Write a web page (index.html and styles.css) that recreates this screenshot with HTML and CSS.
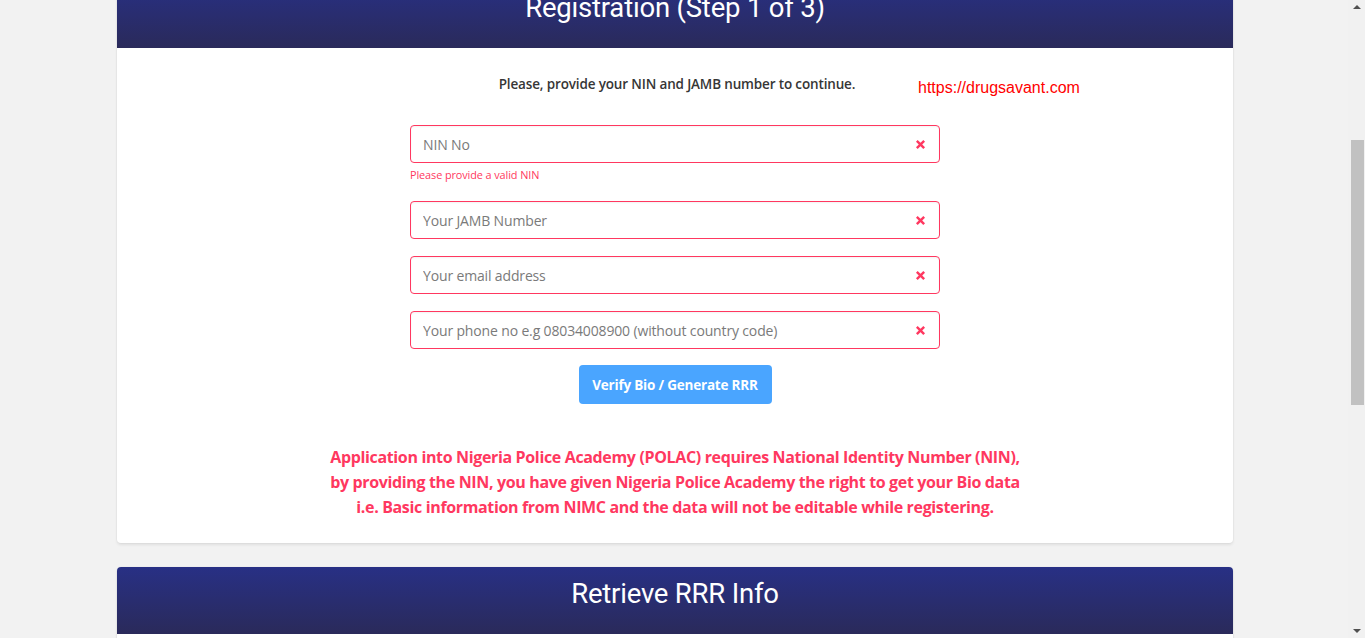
FILE: index.html
```html
<!DOCTYPE html>
<html lang="en">
<head>
<meta charset="utf-8">
<title>Registration</title>
<link rel="stylesheet" href="styles.css">
</head>
<body>
<div class="page">
  <main class="main">
    <section class="card card-first">
      <header class="card-head"><h2 class="card-title">Registration (Step 1 of 3)</h2></header>
      <div class="card-body">
        <a class="watermark" href="#">https://drugsavant.com</a>
        <p class="intro">Please, provide your NIN and JAMB number to continue.</p>
        <form class="form">
          <div class="field field-help">
            <div class="control">
              <input class="input" type="text" placeholder="NIN No">
              <span class="x-icon"><svg viewBox="0 0 12 12" width="11" height="11"><path d="M2 2 L10 10 M10 2 L2 10" stroke="currentColor" stroke-width="2.6"/></svg></span>
            </div>
            <p class="help">Please provide a valid NIN</p>
          </div>
          <div class="field">
            <div class="control">
              <input class="input" type="text" placeholder="Your JAMB Number">
              <span class="x-icon"><svg viewBox="0 0 12 12" width="11" height="11"><path d="M2 2 L10 10 M10 2 L2 10" stroke="currentColor" stroke-width="2.6"/></svg></span>
            </div>
          </div>
          <div class="field">
            <div class="control">
              <input class="input" type="email" placeholder="Your email address">
              <span class="x-icon"><svg viewBox="0 0 12 12" width="11" height="11"><path d="M2 2 L10 10 M10 2 L2 10" stroke="currentColor" stroke-width="2.6"/></svg></span>
            </div>
          </div>
          <div class="field">
            <div class="control">
              <input class="input" type="text" placeholder="Your phone no e.g 08034008900 (without country code)">
              <span class="x-icon"><svg viewBox="0 0 12 12" width="11" height="11"><path d="M2 2 L10 10 M10 2 L2 10" stroke="currentColor" stroke-width="2.6"/></svg></span>
            </div>
          </div>
          <div class="actions">
            <button class="button" type="button">Verify Bio / Generate RRR</button>
          </div>
        </form>
        <p class="notice">Application into Nigeria Police Academy (POLAC) requires National Identity Number (NIN),<br>by providing the NIN, you have given Nigeria Police Academy the right to get your Bio data<br>i.e. Basic information from NIMC and the data will not be editable while registering.</p>
      </div>
    </section>
    <section class="card">
      <header class="card-head"><h2 class="card-title">Retrieve RRR Info</h2></header>
      <div class="card-body card-body-short"></div>
    </section>
  </main>
  <aside class="scrollbar">
    <span class="arrow arrow-up"></span>
    <div class="track"><div class="thumb"></div></div>
    <span class="arrow arrow-down"></span>
  </aside>
</div>
</body>
</html>
```

FILE: styles.css
```css
* { box-sizing: border-box; }
html, body { margin: 0; padding: 0; }
body {
  background: #f2f2f2;
  font-family: "Open Sans", "Noto Sans", sans-serif;
  height: 638px;
  overflow: hidden;
}
.page {
  display: flex;
  height: 638px;
}
.main {
  flex: 1;
  display: flex;
  flex-direction: column;
  align-items: center;
  gap: 24px;
  padding-left: 2px;
  overflow: hidden;
}
.card {
  width: 1116px;
  background: #fff;
  border-radius: 4px;
  box-shadow: 0 2px 3px rgba(10,10,10,0.08), 0 0 0 1px rgba(10,10,10,0.02);
  flex-shrink: 0;
}
.card-first { margin-top: -19px; }
.card-head {
  height: 67px;
  background: linear-gradient(to bottom, #283085 0%, #2a2a5a 100%);
  border-radius: 4px 4px 0 0;
  display: flex;
  justify-content: center;
  padding-top: 12px;
}
.card-title {
  margin: 0;
  color: #fff;
  font-family: "Roboto", sans-serif;
  font-weight: 400;
  font-size: 27.5px;
  line-height: 30px;
  letter-spacing: -0.2px;
}
.card-body {
  position: relative;
  padding: 26px 0 23px;
  display: flex;
  flex-direction: column;
  align-items: center;
}
.card-body-short { height: 60px; }
.watermark {
  position: absolute;
  left: 801px;
  top: 30px;
  color: #f00;
  text-decoration: none;
  font-family: "Liberation Sans", Arial, sans-serif;
  font-size: 16px;
  line-height: 20px;
}
.intro {
  margin: 0 0 0 4px;
  font-size: 13.5px;
  line-height: 20px;
  font-weight: 600;
  color: #363636;
  letter-spacing: -0.15px;
}
.form {
  width: 530px;
  margin-top: 31px;
  display: flex;
  flex-direction: column;
}
.field { margin-bottom: 17px; }
.field-help { margin-bottom: 18px; }
.control { position: relative; }
.input {
  width: 100%;
  height: 38px;
  border: 1px solid #ff3860;
  border-radius: 4px;
  padding: 0 40px 0 12px;
  font-family: "Open Sans", sans-serif;
  font-size: 14px;
  color: #363636;
  background: #fff;
  outline: none;
  box-shadow: inset 0 1px 2px rgba(10,10,10,0.05);
}
.input::placeholder { color: #7a7a7a; opacity: 1; letter-spacing: -0.15px; }
.x-icon {
  position: absolute;
  right: 14px;
  top: 0;
  height: 38px;
  display: flex;
  align-items: center;
  color: #ff3860;
}
.help {
  margin: 4px 0 0;
  font-size: 10.9px;
  line-height: 16px;
  color: #ff3860;
  letter-spacing: -0.1px;
}
.actions {
  display: flex;
  justify-content: center;
  margin-top: -1px;
}
.button {
  width: 193px;
  height: 39px;
  border: none;
  border-radius: 4px;
  background: #4aa5ff;
  color: #fff;
  font-family: "Open Sans", sans-serif;
  font-weight: 700;
  font-size: 13.5px;
  letter-spacing: -0.2px;
  cursor: pointer;
}
.notice {
  margin: 41px 0 0;
  text-align: center;
  color: #ff3860;
  font-weight: 700;
  font-size: 16px;
  line-height: 25px;
  letter-spacing: -0.35px;
}
.scrollbar {
  width: 17px;
  flex-shrink: 0;
  background: #f1f1f1;
  display: flex;
  flex-direction: column;
  align-items: center;
}
.arrow {
  width: 0; height: 0;
  border-left: 4px solid transparent;
  border-right: 4px solid transparent;
  flex-shrink: 0;
}
.arrow-up { border-bottom: 4px solid #505050; margin-top: 5px; margin-bottom: 8px; }
.arrow-down { border-top: 4px solid #505050; margin-top: 8px; margin-bottom: 5px; }
.track { flex: 1; width: 100%; display: flex; justify-content: center; padding-top: 123px; }
.thumb { width: 13px; height: 265px; background: #c1c1c1; margin-left: 2px; }
```
